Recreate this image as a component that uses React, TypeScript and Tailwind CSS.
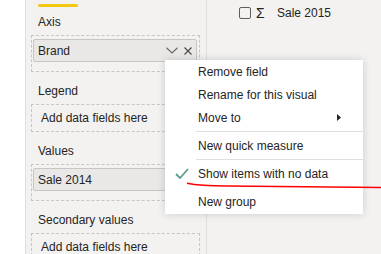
const font = { fontFamily: '"Liberation Sans", Arial, sans-serif' };

const Pill = ({ label, icons }: { label: string; icons?: boolean }) => (
  <div className="flex h-[23px] items-center justify-between rounded-[2px] border border-[#c8c6c4] bg-[#e9e8e7] pl-[4px] pr-[4px]">
    <span className="text-[12px] text-[#252423]">{label}</span>
    {icons && (
      <div className="flex items-center gap-[6px]">
        <svg width="12" height="7" viewBox="0 0 12 7">
          <path d="M0.5 0.8 L6 6 L11.5 0.8" fill="none" stroke="#6b6966" strokeWidth="1.2" />
        </svg>
        <svg width="8" height="8" viewBox="0 0 8 8">
          <path d="M0.5 0.5 L7.5 7.5 M7.5 0.5 L0.5 7.5" fill="none" stroke="#4a4846" strokeWidth="1.1" />
        </svg>
      </div>
    )}
  </div>
);

const MenuRow = ({ text, arrow, check }: { text: string; arrow?: boolean; check?: boolean }) => (
  <div className="relative flex h-[23px] items-center pl-[33px] pr-[22px] text-[12px] text-[#252423]">
    {check && (
      <svg className="absolute left-[10px] top-[6px]" width="14" height="11" viewBox="0 0 14 11">
        <path d="M1 6 L5 10 L13 1" fill="none" stroke="#5b9e8c" strokeWidth="1.8" />
      </svg>
    )}
    <span className="flex-1">{text}</span>
    {arrow && (
      <svg width="4" height="7" viewBox="0 0 4 7">
        <path d="M0 0 L4 3.5 L0 7 Z" fill="#252423" />
      </svg>
    )}
  </div>
);

const Separator = () => (
  <div className="flex h-[5px] items-center pl-[31px]">
    <div className="h-px w-full bg-[#e1dfdd]" />
  </div>
);

export default function App() {
  return (
    <div className="relative flex h-[254px] w-[381px] overflow-hidden bg-[#f3f2f1]" style={font}>
      {/* left strip */}
      <div className="w-[26px] shrink-0 border-r border-[#e1dfdd] bg-white" />

      {/* field wells */}
      <div className="w-[181px] shrink-0 border-r border-[#e1dfdd] pl-[5px] pr-[6px]">
        <div className="ml-[7px] mt-[4px] h-[3px] w-[40px] rounded-full bg-[#f2c811]" />

        <div className="ml-[7px] mt-[7px] h-[16px] text-[12px] leading-[16px] text-[#252423]">Axis</div>
        <div className="mt-[5px] h-[37px] border border-dashed border-[#c8c6c4] pl-[1px] pr-[2px] pt-[3px]">
          <Pill label="Brand" icons />
        </div>

        <div className="ml-[7px] mt-[11px] h-[16px] text-[12px] leading-[16px] text-[#252423]">Legend</div>
        <div className="mt-[5px] flex h-[28px] items-center border border-dashed border-[#c8c6c4] pl-[9px] text-[12px] text-[#252423]">
          Add data fields here
        </div>

        <div className="ml-[7px] mt-[11px] h-[16px] text-[12px] leading-[16px] text-[#252423]">Values</div>
        <div className="mt-[5px] h-[37px] border border-dashed border-[#c8c6c4] pl-[1px] pr-[2px] pt-[3px]">
          <Pill label="Sale 2014" />
        </div>

        <div className="ml-[7px] mt-[11px] h-[16px] text-[12px] leading-[16px] text-[#252423]">Secondary values</div>
        <div className="mt-[5px] flex h-[28px] items-center border border-dashed border-[#c8c6c4] pl-[9px] text-[12px] text-[#252423]">
          Add data fields here
        </div>
      </div>

      {/* fields list */}
      <div className="flex-1">
        <div className="ml-[32px] mt-[6px] flex h-[13px] items-center text-[12px] text-[#252423]">
          <div className="h-[12px] w-[12px] rounded-[2px] border border-[#605e5c] bg-[#f3f2f1]" />
          <span className="ml-[5px] w-[10px] text-[14px] leading-none">Σ</span>
          <span className="ml-[11px]">Sale 2015</span>
        </div>
      </div>

      {/* context menu */}
      <div className="absolute left-[165px] top-[60px] w-[198px] bg-white pb-[1px] shadow-[0_0_8px_rgba(0,0,0,0.16)]">
        <MenuRow text="Remove field" />
        <MenuRow text="Rename for this visual" />
        <MenuRow text="Move to" arrow />
        <Separator />
        <MenuRow text="New quick measure" />
        <Separator />
        <MenuRow text="Show items with no data" check />
        <div className="h-[5px]" />
        <MenuRow text="New group" />
      </div>

      {/* red annotation */}
      <svg className="pointer-events-none absolute left-0 top-0" width="381" height="254">
        <path d="M187 183.3 Q200 186 227 186 L381 187.5" fill="none" stroke="#ff0000" strokeWidth="1.5" />
      </svg>
    </div>
  );
}
